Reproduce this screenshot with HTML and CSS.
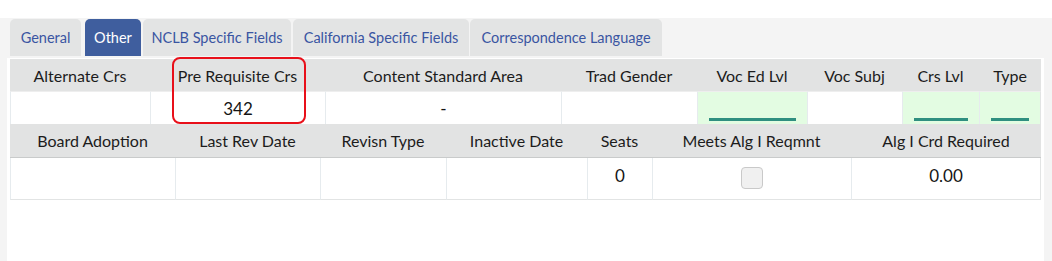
FILE: index.html
```html
<!DOCTYPE html>
<html>
<head>
<meta charset="utf-8">
<link rel="stylesheet" href="styles.css">
</head>
<body>
<div class="frame">
  <div class="tabs">
    <div class="tab t-general">General</div>
    <div class="tab active t-other">Other</div>
    <div class="tab t-nclb">NCLB Specific Fields</div>
    <div class="tab t-ca">California Specific Fields</div>
    <div class="tab t-corr">Correspondence Language</div>
  </div>
  <div class="panel">
    <div class="grid grid1">
      <div class="th">Alternate Crs</div>
      <div class="th">Pre Requisite Crs</div>
      <div class="th">Content Standard Area</div>
      <div class="th">Trad Gender</div>
      <div class="th">Voc Ed Lvl</div>
      <div class="th">Voc Subj</div>
      <div class="th">Crs Lvl</div>
      <div class="th">Type</div>
      <div class="td r1"></div>
      <div class="td r1 val">342</div>
      <div class="td r1 val">-</div>
      <div class="td r1"></div>
      <div class="td r1 green"><span class="bar"></span></div>
      <div class="td r1"></div>
      <div class="td r1 green"><span class="bar"></span></div>
      <div class="td r1 green last"><span class="bar"></span></div>
      <div class="highlight"></div>
    </div>
    <div class="grid grid2">
      <div class="th h2">Board Adoption</div>
      <div class="th h2">Last Rev Date</div>
      <div class="th h2">Revisn Type</div>
      <div class="th h2">Inactive Date</div>
      <div class="th h2">Seats</div>
      <div class="th h2">Meets Alg I Reqmnt</div>
      <div class="th h2">Alg I Crd Required</div>
      <div class="td r2"></div>
      <div class="td r2"></div>
      <div class="td r2"></div>
      <div class="td r2"></div>
      <div class="td r2 val">0</div>
      <div class="td r2 cb-cell"><span class="checkbox"></span></div>
      <div class="td r2 val last">0.00</div>
    </div>
  </div>
</div>
</body>
</html>
```
FILE: styles.css
```css
html, body {
  margin: 0;
  padding: 0;
  background: #ffffff;
}
body {
  font-family: "Lato", "Noto Sans", sans-serif;
  color: #1f1f1f;
  padding-top: 18px;
}
.frame {
  background: #f4f4f4;
  height: 243px;
  padding-top: 1px;
  box-sizing: border-box;
}
.tabs {
  display: flex;
  margin-left: 10px;
  height: 37px;
}
.tab {
  background: #e3e4e4;
  color: #3a55a2;
  font-size: 14.5px;
  border-radius: 5px 5px 0 0;
  display: flex;
  align-items: center;
  justify-content: center;
  box-sizing: border-box;
  margin-right: 2px;
  white-space: nowrap;
}
.tab.active {
  background: #3f5e9e;
  color: #ffffff;
}
.t-general { width: 71px; margin-right: 4px; }
.t-other { width: 56px; }
.t-nclb { width: 148px; }
.t-ca { width: 176px; margin-right: 1px; }
.t-corr { width: 192px; }
.panel {
  margin-left: 7px;
  margin-top: 2px;
  width: 1037px;
  height: 203px;
  background: #ffffff;
  padding: 1px 3px 0 3px;
  box-sizing: border-box;
}
.grid {
  display: grid;
  position: relative;
  width: 1031px;
}
.grid1 {
  grid-template-columns: 140px 175px 236px 136px 110px 95px 77px 62px;
  grid-template-rows: 32px 33px;
}
.grid2 {
  grid-template-columns: 165px 145px 126px 141px 65px 199px 190px;
  grid-template-rows: 34px 42px;
}
.th {
  background: #e2e3e3;
  font-size: 16px;
  color: #1c1c1c;
  display: flex;
  align-items: center;
  justify-content: center;
  white-space: nowrap;
}
.h2 {
  border-bottom: 1px solid #c9cbcb;
}
.td {
  background: #ffffff;
  border-left: 1px solid #e6ebee;
  border-top: 1px solid #eeeeee;
  box-sizing: border-box;
  position: relative;
  font-size: 17px;
  color: #151515;
  display: flex;
  justify-content: center;
}
.td.last {
  border-right: 1px solid #e2e4e4;
}
.r1 {
  align-items: center;
}
.r2 {
  align-items: flex-start;
  padding-top: 7px;
  border-top: none;
  border-bottom: 1px solid #e2e4e4;
}
.green {
  background: #e3fce2;
}
.bar {
  position: absolute;
  left: 11px;
  right: 11px;
  bottom: 3px;
  height: 3px;
  background: #2f8f80;
}
.checkbox {
  display: block;
  width: 20px;
  height: 20px;
  border: 1px solid #c9c9c9;
  border-radius: 4px;
  background: #f0f0f0;
}
.cb-cell {
  padding-top: 9px;
}
.highlight {
  position: absolute;
  left: 162px;
  top: -2px;
  width: 134px;
  height: 67px;
  border: 2px solid #e8101a;
  border-radius: 8px;
  box-sizing: border-box;
  pointer-events: none;
}
```
